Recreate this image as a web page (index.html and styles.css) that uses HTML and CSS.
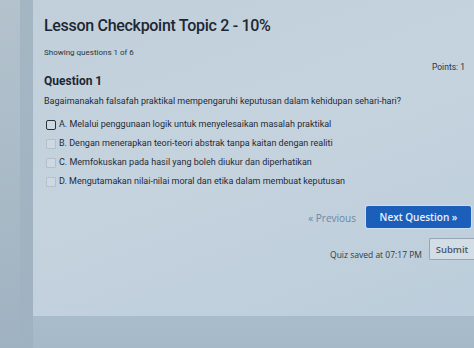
FILE: index.html
```html
<!DOCTYPE html>
<html>
<head>
<meta charset="utf-8">
<link rel="stylesheet" href="styles.css">
</head>
<body>
<div class="screen">
  <div class="side">
    <div class="side-a"></div>
    <div class="side-b"></div>
  </div>
  <div class="main">
    <div class="card">
      <h1 class="title">Lesson Checkpoint Topic 2 - 10%</h1>
      <div class="showing">Showing questions 1 of 6</div>
      <div class="qhead">
        <div class="qtitle">Question 1</div>
        <div class="points">Points: 1</div>
      </div>
      <div class="qtext">Bagaimanakah falsafah praktikal mempengaruhi keputusan dalam kehidupan sehari-hari?</div>
      <div class="options">
        <div class="opt"><span class="box focus"></span><span>A. Melalui penggunaan logik untuk menyelesaikan masalah praktikal</span></div>
        <div class="opt"><span class="box"></span><span>B. Dengan menerapkan teori-teori abstrak tanpa kaitan dengan realiti</span></div>
        <div class="opt"><span class="box"></span><span>C. Memfokuskan pada hasil yang boleh diukur dan diperhatikan</span></div>
        <div class="opt"><span class="box"></span><span>D. Mengutamakan nilai-nilai moral dan etika dalam membuat keputusan</span></div>
      </div>
      <div class="nav">
        <span class="prev">« Previous</span>
        <span class="next">Next Question »</span>
      </div>
      <div class="save">
        <span class="saved">Quiz saved at 07:17 PM</span>
        <span class="submit">Submit</span>
      </div>
    </div>
    <div class="below"></div>
  </div>
</div>
</body>
</html>
```

FILE: styles.css
```css
html, body {
  margin: 0;
  padding: 0;
  width: 474px;
  height: 348px;
  overflow: hidden;
  background: #a9bccb;
}
.screen {
  display: flex;
  width: 474px;
  height: 348px;
}
.side {
  display: flex;
  width: 33px;
  flex: none;
}
.side-a {
  width: 20px;
  background: linear-gradient(180deg, #b3c2cd 0%, #a8b9c6 60%, #9fb2c1 100%);
}
.side-b {
  width: 13px;
  background: linear-gradient(180deg, #a5b6c3 0%, #9fb2c1 100%);
}
.main {
  flex: 1;
  display: flex;
  flex-direction: column;
}
.card {
  height: 316px;
  box-sizing: border-box;
  padding: 15px 0 0 11px;
  background: linear-gradient(160deg, #c1cfdb 0%, #c5d3de 45%, #bccddb 100%);
  font-family: Roboto, "Liberation Sans", sans-serif;
  color: #1f2a35;
}
.below {
  flex: 1;
  background: linear-gradient(180deg, #a9bccb, #a6b9c9);
}
.title {
  margin: 0;
  font-size: 16px;
  font-weight: 500;
  letter-spacing: -0.3px;
  line-height: 22px;
  color: #1c2733;
}
.showing {
  margin-top: 11px;
  font-size: 8px;
  line-height: 10px;
  color: #2a3440;
}
.qhead {
  display: flex;
  justify-content: space-between;
  align-items: flex-start;
  padding-right: 9px;
  margin-top: 4px;
}
.qtitle {
  margin-top: 12px;
  font-size: 12px;
  font-weight: 700;
  line-height: 14px;
  color: #1c2733;
}
.points {
  font-size: 8.5px;
  line-height: 10px;
  color: #2a3440;
}
.qtext {
  margin-top: 7px;
  font-size: 9px;
  line-height: 12px;
  color: #1f2a35;
}
.options {
  margin-top: 12px;
  display: flex;
  flex-direction: column;
  gap: 8px;
}
.opt {
  display: flex;
  align-items: center;
  gap: 3px;
  font-size: 9px;
  line-height: 11px;
  color: #1f2a35;
}
.box {
  width: 10px;
  height: 10px;
  box-sizing: border-box;
  margin-left: 2px;
  border: 1px solid #b3c0cb;
  background: #ccd8e2;
  border-radius: 1px;
}
.box.focus {
  border: 1.5px solid #2a323b;
  border-radius: 2px;
}
.nav {
  display: flex;
  justify-content: flex-end;
  align-items: center;
  gap: 10px;
  margin-top: 19px;
  padding-right: 3px;
  font-family: "Open Sans", "Liberation Sans", sans-serif;
}
.prev {
  font-size: 10px;
  color: #6a86a8;
  margin-top: 2px;
}
.next {
  width: 105px;
  height: 22px;
  box-sizing: border-box;
  display: flex;
  align-items: center;
  justify-content: center;
  background: #1b5fba;
  color: #e9f0fa;
  font-size: 10px;
  font-weight: 600;
  border-radius: 2px;
  box-shadow: 0 0 0 1px #c9dff4;
}
.save {
  display: flex;
  justify-content: flex-end;
  align-items: center;
  gap: 7px;
  margin-top: 10px;
  font-family: "Open Sans", "Liberation Sans", sans-serif;
}
.saved {
  font-size: 8.5px;
  color: #2f3a46;
  margin-top: 10px;
}
.submit {
  width: 45px;
  height: 22px;
  box-sizing: border-box;
  display: flex;
  align-items: center;
  justify-content: center;
  border: 1px solid #98a5b2;
  border-right: none;
  border-radius: 2px 0 0 2px;
  background: #d3dde6;
  color: #4b5866;
  font-size: 9.5px;
  font-weight: 600;
}
```
